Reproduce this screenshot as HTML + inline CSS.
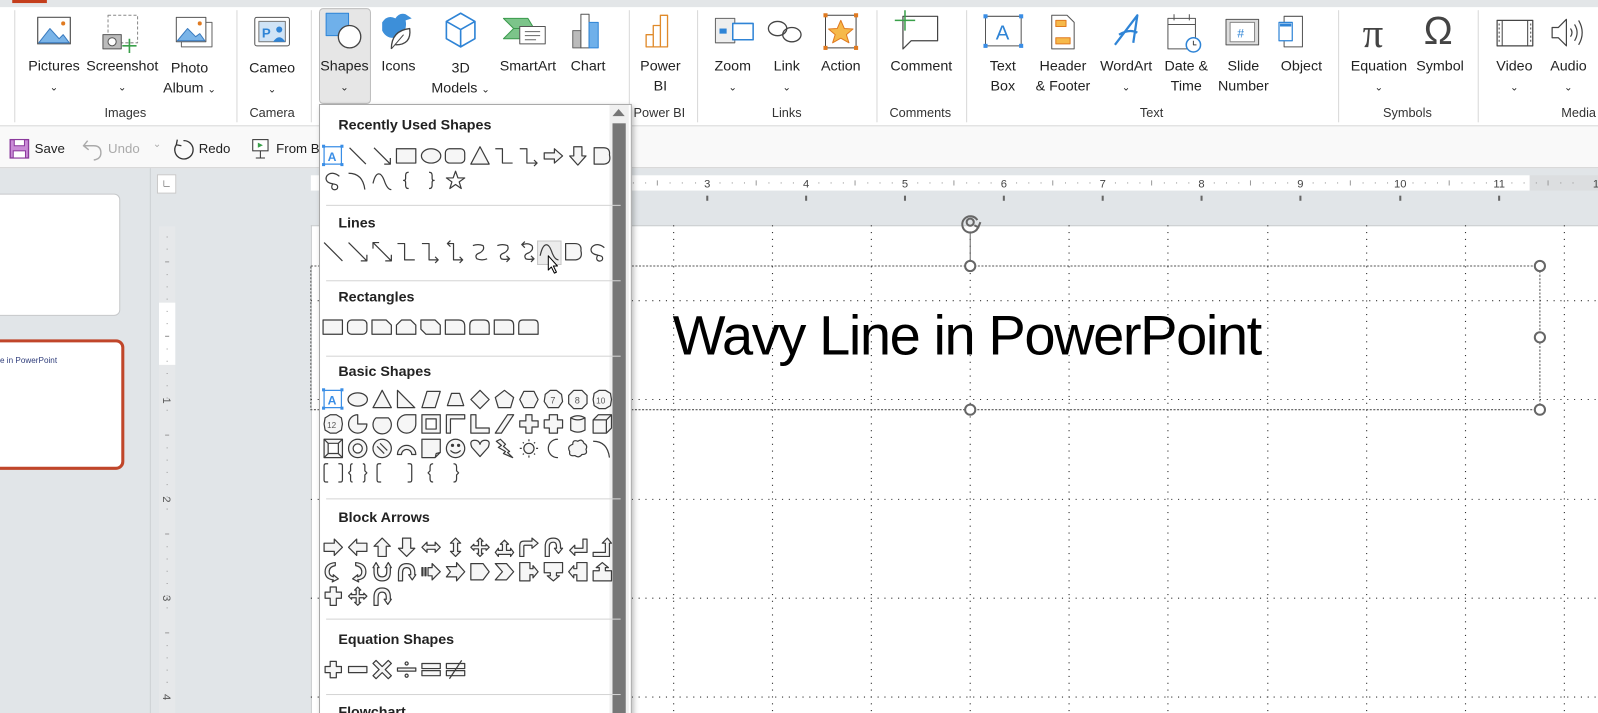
<!DOCTYPE html>
<html><head><meta charset="utf-8">
<style>
html,body{margin:0;padding:0;width:1598px;height:713px;overflow:hidden;background:#e1e5e8;}
#w{position:absolute;left:0;top:0;width:1568px;height:700px;transform:scale(1.01913);transform-origin:0 0;font-family:"Liberation Sans",Arial,sans-serif;color:#222;overflow:hidden;background:#e1e5e8}
.a{position:absolute}
.lbl{position:absolute;font-size:14px;text-align:center;line-height:20px;white-space:nowrap;transform:translateX(-50%)}
.glbl{position:absolute;font-size:12.5px;top:104px;transform:translateX(-50%);color:#333;white-space:nowrap}
.sep{position:absolute;top:10px;height:110px;width:1px;background:#d8d8d8}
.chev{font-size:10px}
.hd{position:absolute;left:332px;font-weight:bold;font-size:14px;color:#222}
.hs{position:absolute;left:320px;width:289px;height:1px;background:#d4d4d4}
</style></head><body><div id="w">
<!-- top strip -->
<div class="a" style="left:0;top:0;width:1568px;height:7px;background:#e3e6e8"></div>
<div class="a" style="left:12px;top:0;width:34px;height:3px;background:#c43e1c"></div>
<!-- ribbon -->
<div class="a" style="left:0;top:7px;width:1568px;height:116px;background:#fff;border-bottom:1px solid #d4d4d4"></div>
<div class="a" style="left:0;top:124px;width:1568px;height:40px;background:#f9f9f9;border-bottom:1px solid #d4d4d4"></div>

<div class="sep" style="left:14px"></div>
<div class="sep" style="left:232px"></div>
<div class="sep" style="left:305px"></div>
<div class="sep" style="left:617px"></div>
<div class="sep" style="left:684px"></div>
<div class="sep" style="left:860px"></div>
<div class="sep" style="left:948px"></div>
<div class="sep" style="left:1313px"></div>
<div class="sep" style="left:1450px"></div>

<!-- Shapes highlighted button -->
<div class="a" style="left:313px;top:8px;width:49px;height:92px;background:#e6e6e6;border:1px solid #bdbdbd;border-radius:4px"></div>

<svg class="a" style="left:0;top:0" width="1568" height="124">
<g stroke-linejoin="round">
<rect x="37" y="17" width="32" height="26" fill="#fff" stroke="#555" stroke-width="1.2"/>
<path d="M38 42 L49 28 L58 38 L62 34 L68 42Z" fill="#7ab4e8" stroke="#3a7bbf"/>
<circle cx="62" cy="23" r="2" fill="#e07a20"/>
<rect x="106" y="15" width="29" height="27" fill="none" stroke="#888" stroke-dasharray="3,2"/>
<rect x="101" y="34" width="18" height="14" fill="#bbb" stroke="#555"/>
<circle cx="110" cy="41" r="4" fill="#fff" stroke="#555"/>
<path d="M127 38 V52 M120 45 H134" stroke="#3aa04a" stroke-width="1.6"/>
<rect x="178" y="22" width="30" height="24" fill="#fff" stroke="#666"/>
<rect x="173" y="17" width="29" height="24" fill="#fff" stroke="#555"/>
<path d="M174 40 L184 28 L192 36 L196 33 L201 40Z" fill="#7ab4e8" stroke="#3a7bbf"/>
<circle cx="196" cy="23" r="2" fill="#e07a20"/>
<rect x="250" y="17" width="34" height="28" rx="2" fill="#fff" stroke="#555"/>
<rect x="254" y="21" width="26" height="20" fill="#cfe3f6" stroke="#777"/>
<text x="257" y="37" font-size="13" font-family="Liberation Sans" fill="#2f84d6" font-weight="bold">P</text>
<circle cx="274" cy="29" r="3" fill="#2f84d6"/><path d="M268 41 Q274 32 280 41Z" fill="#2f84d6"/>
<rect x="320" y="13" width="22" height="22" fill="#6fb0ea" stroke="#2f84d6"/>
<circle cx="343" cy="36" r="11" fill="#fff" stroke="#444" stroke-width="1.3"/>
<path d="M375 22 Q380 14 388 18 Q392 12 398 14 L404 18 L398 20 Q400 30 392 36 Q380 40 375 30Z" fill="#3d8fd9"/>
<path d="M384 48 Q384 30 402 28 Q404 44 388 44" fill="#fff" stroke="#444" stroke-width="1.3"/>
<path d="M384 48 L396 34" stroke="#444"/>
<path d="M452 13 L466 21 V38 L452 46 L438 38 V21Z M438 21 L452 29 L466 21 M452 29 V46" fill="none" stroke="#2f84d6" stroke-width="1.6"/>
<path d="M494 18 H518 L524 28 H504Z M504 28 H524 L518 38 H494Z" fill="#7cc48a" stroke="#3a9a4c"/>
<rect x="510" y="26" width="25" height="17" fill="#fff" stroke="#555"/>
<path d="M515 31 H530 M515 35 H530 M515 39 H526" stroke="#666"/>
<rect x="562" y="30" width="8" height="17" fill="#bbb" stroke="#666"/>
<rect x="570" y="14" width="8" height="33" fill="#fff" stroke="#555"/>
<rect x="578" y="22" width="9" height="25" fill="#6fb0ea" stroke="#2f84d6"/>
<path d="M634 46 V34 H641 V25 H648 V15 H655 V46Z M641 46 V34 M648 46 V25" fill="#fff" stroke="#e08a2a" stroke-width="1.3"/>
<rect x="702" y="18" width="19" height="24" fill="#eee" stroke="#666"/>
<rect x="719" y="23" width="20" height="16" fill="#fff" stroke="#2f84d6" stroke-width="1.5"/>
<rect x="706" y="28" width="7" height="5" fill="#2f84d6"/>
<ellipse cx="763" cy="28" rx="9" ry="7" fill="none" stroke="#444" stroke-width="1.3"/>
<ellipse cx="777" cy="34" rx="9" ry="7" fill="none" stroke="#444" stroke-width="1.3"/>
<rect x="810" y="15" width="30" height="32" fill="#fff" stroke="#444"/>
<path d="M825 20 L828.5 28 L837 28.5 L830.5 34 L833 42 L825 37.5 L817 42 L819.5 34 L813 28.5 L821.5 28Z" fill="#f6b94a" stroke="#e07a20"/>
<g fill="#e07a20"><rect x="808" y="13" width="4" height="4"/><rect x="838" y="13" width="4" height="4"/><rect x="808" y="45" width="4" height="4"/><rect x="838" y="45" width="4" height="4"/></g>
<path d="M886 16 H920 V40 H894 L886 48 V40 H886Z" fill="#fff" stroke="#444" stroke-width="1.2"/>
<path d="M888 10 V30 M878 20 H898" stroke="#3aa04a" stroke-width="1.5"/>
<rect x="967" y="16" width="35" height="29" fill="#fff" stroke="#555"/>
<text x="977" y="39" font-size="20" font-family="Liberation Sans" fill="#2f84d6">A</text>
<g fill="#3a8ee6"><rect x="965" y="14" width="4" height="4"/><rect x="1000" y="14" width="4" height="4"/><rect x="965" y="43" width="4" height="4"/><rect x="1000" y="43" width="4" height="4"/></g>
<path d="M1032 15 H1047 L1054 22 V48 H1032Z" fill="#fff" stroke="#555"/>
<rect x="1036" y="20" width="10" height="6" fill="#f6b94a" stroke="#e07a20"/>
<rect x="1036" y="37" width="14" height="6" fill="#f6b94a" stroke="#e07a20"/>
<path d="M1094 44 L1116 15 L1112 42 M1098 34 Q1108 28 1116 32" fill="none" stroke="#2f84d6" stroke-width="2.2"/>
<rect x="1146" y="18" width="27" height="30" fill="#fff" stroke="#555"/>
<path d="M1146 24 H1173 M1152 14 V20 M1167 14 V20" stroke="#555"/>
<circle cx="1171" cy="44" r="7" fill="#fff" stroke="#2f84d6" stroke-width="1.5"/>
<path d="M1171 40 V44 H1174" stroke="#444" fill="none"/>
<rect x="1203" y="19" width="32" height="25" fill="#ddd" stroke="#555"/>
<rect x="1207" y="22" width="24" height="19" fill="#fff" stroke="#888"/>
<text x="1214" y="37" font-size="12" font-family="Liberation Sans" fill="#2f84d6">#</text>
<rect x="1260" y="16" width="18" height="30" fill="#fff" stroke="#555"/>
<rect x="1255" y="22" width="13" height="18" fill="#fff" stroke="#2f84d6" stroke-width="1.2"/>
<rect x="1256" y="23" width="11" height="3" fill="#2f84d6"/>
<rect x="1469" y="20" width="35" height="25" fill="#fff" stroke="#444" stroke-width="1.2"/>
<path d="M1474 20 V45 M1499 20 V45" stroke="#444"/>
<path d="M1471 23 V43 M1502 23 V43" stroke="#444" stroke-dasharray="2,2"/>
<path d="M1523 27 H1529 L1537 19 V45 L1529 37 H1523Z" fill="#fff" stroke="#444" stroke-width="1.2"/>
<path d="M1541 28 Q1544 32 1541 36 M1545 24 Q1550 32 1545 40 M1549 20 Q1556 32 1549 44" fill="none" stroke="#444" stroke-width="1.2"/>
</g>
</svg>
<div class="a" style="left:1337px;top:9px;font-size:40px;font-family:'Liberation Serif',serif;color:#444">π</div>
<div class="a" style="left:1397px;top:10px;font-size:38px;font-family:'Liberation Sans',sans-serif;color:#444">Ω</div>

<div class="lbl" style="left:53px;top:54px">Pictures<br><span class="chev">⌄</span></div>
<div class="lbl" style="left:120px;top:54px">Screenshot<br><span class="chev">⌄</span></div>
<div class="lbl" style="left:186px;top:56px">Photo<br>Album <span class="chev">⌄</span></div>
<div class="lbl" style="left:267px;top:56px">Cameo<br><span class="chev">⌄</span></div>
<div class="lbl" style="left:338px;top:54px">Shapes<br><span class="chev">⌄</span></div>
<div class="lbl" style="left:391px;top:54px">Icons</div>
<div class="lbl" style="left:452px;top:56px">3D<br>Models <span class="chev">⌄</span></div>
<div class="lbl" style="left:518px;top:54px">SmartArt</div>
<div class="lbl" style="left:577px;top:54px">Chart</div>
<div class="lbl" style="left:648px;top:54px">Power<br>BI</div>
<div class="lbl" style="left:719px;top:54px">Zoom<br><span class="chev">⌄</span></div>
<div class="lbl" style="left:772px;top:54px">Link<br><span class="chev">⌄</span></div>
<div class="lbl" style="left:825px;top:54px">Action</div>
<div class="lbl" style="left:904px;top:54px">Comment</div>
<div class="lbl" style="left:984px;top:54px">Text<br>Box</div>
<div class="lbl" style="left:1043px;top:54px">Header<br>&amp; Footer</div>
<div class="lbl" style="left:1105px;top:54px">WordArt<br><span class="chev">⌄</span></div>
<div class="lbl" style="left:1164px;top:54px">Date &amp;<br>Time</div>
<div class="lbl" style="left:1220px;top:54px">Slide<br>Number</div>
<div class="lbl" style="left:1277px;top:54px">Object</div>
<div class="lbl" style="left:1353px;top:54px">Equation<br><span class="chev">⌄</span></div>
<div class="lbl" style="left:1413px;top:54px">Symbol</div>
<div class="lbl" style="left:1486px;top:54px">Video<br><span class="chev">⌄</span></div>
<div class="lbl" style="left:1539px;top:54px">Audio<br><span class="chev">⌄</span></div>

<div class="glbl" style="left:123px">Images</div>
<div class="glbl" style="left:267px">Camera</div>
<div class="glbl" style="left:647px">Power BI</div>
<div class="glbl" style="left:772px">Links</div>
<div class="glbl" style="left:903px">Comments</div>
<div class="glbl" style="left:1130px">Text</div>
<div class="glbl" style="left:1381px">Symbols</div>
<div class="glbl" style="left:1549px">Media</div>

<svg class="a" style="left:0;top:124px" width="320" height="40">
<rect x="10" y="13" width="18" height="18" fill="#c98bd6" stroke="#8b3a9c" stroke-width="1.3"/>
<rect x="14" y="13" width="10" height="6" fill="#fff" stroke="#8b3a9c"/>
<rect x="13" y="24" width="12" height="7" fill="#fff" stroke="#8b3a9c"/>
<path d="M86 14 L82 19 L87 23 M82 19 H92 Q99 19 99 26 Q99 32 92 33" fill="none" stroke="#aaa" stroke-width="1.4"/>
<path d="M180 14 A9 9 0 1 1 173 18 M174 13 L173 18 L178 19" fill="none" stroke="#333" stroke-width="1.3"/>
<rect x="248" y="13" width="15" height="11" fill="#fff" stroke="#333"/>
<path d="M253 16 L258 18.5 L253 21Z" fill="#3aa04a"/>
<path d="M255.5 24 V31 M251 31 H260" stroke="#333"/>
</svg>
<div class="a" style="left:34px;top:138px;font-size:13px">Save</div>
<div class="a" style="left:106px;top:138px;font-size:13px;color:#aaa">Undo</div>
<div class="a" style="left:150px;top:136px;font-size:10px;color:#aaa">⌄</div>
<div class="a" style="left:195px;top:138px;font-size:13px">Redo</div>
<div class="a" style="left:271px;top:138px;font-size:13px">From Be</div>

<div class="a" style="left:147px;top:165px;width:1px;height:535px;background:#cdd1d4"></div>
<div class="a" style="left:-10px;top:190px;width:126px;height:118px;background:#fff;border:1px solid #c6c8ca;border-radius:6px"></div>
<div class="a" style="left:-10px;top:333px;width:126px;height:122px;background:#fff;border:3px solid #c0462a;border-radius:8px"></div>
<div class="a" style="left:0;top:349px;font-size:8px;color:#2e3c7a">e in PowerPoint</div>

<div class="a" style="left:154px;top:171px;width:17px;height:17px;background:#fff;border:1px solid #c8c8c8;font-size:10px;line-height:17px;text-align:center;color:#333">∟</div>
<div class="a" style="left:156px;top:222px;width:16px;height:478px;background:#e6e8ea"></div>
<div class="a" style="left:156px;top:297px;width:16px;height:61px;background:#fff"></div>
<svg class="a" style="left:156px;top:222px" width="16" height="478">
<g stroke="#999">
<path d="M8 10 V11 M8 22 V23 M6 35 H10 M8 47 V48 M8 59 V60 M8 71 V72 M8 83 V84 M8 95 V96 M6 108 H10 M8 120 V121 M8 132 V133 M8 144 V145 M8 156 V157 M8 168 V169 M8 180 V181 M6 205 H10 M8 217 V218 M8 229 V230 M8 241 V242 M8 253 V254 M8 265 V266 M8 277 V278 M6 302 H10 M8 314 V315 M8 326 V327 M8 338 V339 M8 350 V351 M8 362 V363 M8 374 V375 M6 399 H10 M8 411 V412 M8 423 V424 M8 435 V436 M8 447 V448"/>
</g>
<g font-size="11" font-family="Liberation Sans" fill="#555">
<text transform="translate(4,168) rotate(90)">1</text>
<text transform="translate(4,265) rotate(90)">2</text>
<text transform="translate(4,362) rotate(90)">3</text>
<text transform="translate(4,459) rotate(90)">4</text>
</g>
</svg>
<div class="a" style="left:305px;top:172px;width:1196px;height:15px;background:#fff"></div>
<div class="a" style="left:1501px;top:172px;width:67px;height:15px;background:#dcdee0"></div>
<svg class="a" style="left:305px;top:172px" width="1263" height="30">
<g font-size="11" font-family="Liberation Sans" fill="#444" text-anchor="middle">
<text x="389" y="12">3</text><text x="486" y="12">4</text><text x="583" y="12">5</text><text x="680" y="12">6</text><text x="777" y="12">7</text><text x="874" y="12">8</text><text x="971" y="12">9</text><text x="1069" y="12">10</text><text x="1166" y="12">11</text><text x="1261" y="12">1</text>
</g>
<g stroke="#999">
<path d="M316 7.5 h1 M328 7.5 h1 M340 5 v5 M352 7.5 h1 M364 7.5 h1 M377 7.5 h1 M401 7.5 h1 M413 7.5 h1 M425 7.5 h1 M437 5 v5 M449 7.5 h1 M461 7.5 h1 M473 7.5 h1 M498 7.5 h1 M510 7.5 h1 M522 7.5 h1 M534 5 v5 M546 7.5 h1 M558 7.5 h1 M570 7.5 h1 M595 7.5 h1 M607 7.5 h1 M619 7.5 h1 M631 5 v5 M643 7.5 h1 M655 7.5 h1 M667 7.5 h1 M692 7.5 h1 M704 7.5 h1 M716 7.5 h1 M728 5 v5 M740 7.5 h1 M752 7.5 h1 M764 7.5 h1 M789 7.5 h1 M801 7.5 h1 M813 7.5 h1 M825 5 v5 M837 7.5 h1 M849 7.5 h1 M861 7.5 h1 M886 7.5 h1 M898 7.5 h1 M910 7.5 h1 M922 5 v5 M934 7.5 h1 M946 7.5 h1 M958 7.5 h1 M983 7.5 h1 M995 7.5 h1 M1007 7.5 h1 M1020 5 v5 M1032 7.5 h1 M1044 7.5 h1 M1056 7.5 h1 M1081 7.5 h1 M1093 7.5 h1 M1105 7.5 h1 M1117 5 v5 M1129 7.5 h1 M1141 7.5 h1 M1153 7.5 h1 M1178 7.5 h1 M1190 7.5 h1 M1202 7.5 h1 M1214 5 v5 M1226 7.5 h1 M1238 7.5 h1"/>
</g>
<g fill="#666"><rect x="388" y="20" width="2" height="5"/><rect x="485" y="20" width="2" height="5"/><rect x="582" y="20" width="2" height="5"/><rect x="679" y="20" width="2" height="5"/><rect x="776" y="20" width="2" height="5"/><rect x="873" y="20" width="2" height="5"/><rect x="970" y="20" width="2" height="5"/><rect x="1068" y="20" width="2" height="5"/><rect x="1165" y="20" width="2" height="5"/></g>
</svg>

<div class="a" style="left:305px;top:221px;width:1263px;height:479px;background:#fff;border-top:1px solid #c5c8ca;border-left:1px solid #c5c8ca"></div>
<svg class="a" style="left:305px;top:221px;overflow:visible" width="1263" height="479">
<g stroke="#333" stroke-width="1.1" stroke-dasharray="1.1,5.6" fill="none">
<path d="M64 0 V479 M161 0 V479 M258 0 V479 M356 0 V479 M453 0 V479 M550 0 V479 M647 0 V479 M744 0 V479 M841 0 V479 M939 0 V479 M1036 0 V479 M1133 0 V479 M1230 0 V479"/>
<path d="M0 74 H1263 M0 171 H1263 M0 269 H1263 M0 366 H1263 M0 463 H1263"/>
</g>
<g stroke="#555" stroke-width="1" stroke-dasharray="2,1.5" fill="none">
<rect x="0" y="40" width="1206" height="141"/>
</g>
<path d="M647 6 V35" stroke="#666"/>
<g fill="#fff" stroke="#666" stroke-width="2">
<circle cx="647" cy="40" r="5"/><circle cx="1206" cy="40" r="5"/><circle cx="1206" cy="110" r="5"/><circle cx="647" cy="181" r="5"/><circle cx="1206" cy="181" r="5"/>
</g>
<g fill="none" stroke="#666" stroke-width="2"><path d="M654 -5 A8 8 0 1 0 655 1"/><circle cx="647" cy="-3" r="3.5"/><path d="M651 0 L655 2 L657 -3"/></g>
<text x="355" y="127" font-size="55" font-family="Liberation Sans" letter-spacing="-1.4" fill="#000">Wavy Line in PowerPoint</text>
</svg>

<div class="a" style="left:313px;top:102px;width:305px;height:600px;background:#fff;border:1px solid #a8a8a8;box-shadow:2px 2px 5px rgba(0,0,0,.25)"></div>
<div class="a" style="left:598px;top:103px;width:19px;height:600px;background:#f0f0f0"></div>
<div class="a" style="left:601px;top:121px;width:13px;height:580px;background:#777"></div>
<div class="a" style="left:601px;top:107px;width:0;height:0;border-left:6px solid transparent;border-right:6px solid transparent;border-bottom:7px solid #777"></div>

<div class="hd" style="top:114px">Recently Used Shapes</div>
<div class="hs" style="top:201px"></div>
<div class="hd" style="top:210px">Lines</div>
<div class="hs" style="top:275px"></div>
<div class="hd" style="top:283px">Rectangles</div>
<div class="hs" style="top:349px"></div>
<div class="hd" style="top:356px">Basic Shapes</div>
<div class="hs" style="top:489px"></div>
<div class="hd" style="top:499px">Block Arrows</div>
<div class="hs" style="top:607px"></div>
<div class="hd" style="top:619px">Equation Shapes</div>
<div class="hs" style="top:681px"></div>
<div class="hd" style="top:690px">Flowchart</div>

<div class="a" style="left:527px;top:236px;width:22px;height:22px;background:#ececec;border:1px solid #c6c6c6"></div>

<svg class="a" style="left:0;top:0" width="620" height="700">
<g fill="#f6f6f6" stroke="#3c3c3c" stroke-width="1.2" stroke-linejoin="round">
<g transform="translate(317,143)"><rect x="1" y="1" width="17" height="17" fill="#fff" stroke="#3a8ee6"/><text x="4.5" y="15" font-size="12" font-weight="bold" font-family="Liberation Sans" fill="#3a8ee6" stroke="none">A</text><g fill="#3a8ee6" stroke="none"><rect x="-1" y="-1" width="3" height="3"/><rect x="17" y="-1" width="3" height="3"/><rect x="-1" y="17" width="3" height="3"/><rect x="17" y="17" width="3" height="3"/></g></g>
<g transform="translate(341,143)" fill="none"><path d="M2 2 L18 18"/></g>
<g transform="translate(365,143)" fill="none"><path d="M2 2 L18 18 M18 12 V18 H12"/></g>
<g transform="translate(389,143)"><rect x="0" y="3" width="19" height="14"/></g>
<g transform="translate(413,143)"><ellipse cx="10" cy="10" rx="9.5" ry="7"/></g>
<g transform="translate(437,143)"><rect x="0" y="3" width="19" height="14" rx="4"/></g>
<g transform="translate(461,143)"><path d="M10 1 L19 18 H1Z"/></g>
<g transform="translate(485,143)" fill="none"><path d="M1 3 H8 V17 H18"/></g>
<g transform="translate(509,143)" fill="none"><path d="M1 3 H8 V17 H18 M15 14 L18 17 L15 20"/></g>
<g transform="translate(533,143)"><path d="M1 7 H11 V3 L19 10 L11 17 V13 H1Z"/></g>
<g transform="translate(557,143)"><path d="M6 1 H14 V10 H18 L10 19 L2 10 H6Z"/></g>
<g transform="translate(581,143)"><path d="M2 2 H11 Q18 2 17 9 Q19 17 12 18 H2Z"/></g>
<g transform="translate(317,167)" fill="none"><path d="M16 6 C8 -1 0 6 4 11 C8 15 16 12 14 18 C11 21 6 18 10 13"/></g>
<g transform="translate(341,167)" fill="none"><path d="M1 3 Q15 3 17 19"/></g>
<g transform="translate(365,167)" fill="none"><path d="M1 13 C4 0 9 2 12 10 C14 16 16 19 19 19"/></g>
<g transform="translate(389,167)" fill="none"><path d="M12 2 Q9 2 9 5 V8 Q9 10 7 10 Q9 10 9 12 V15 Q9 18 12 18"/></g>
<g transform="translate(413,167)" fill="none"><path d="M8 2 Q11 2 11 5 V8 Q11 10 13 10 Q11 10 11 12 V15 Q11 18 8 18"/></g>
<g transform="translate(437,167)"><path d="M10 1 L12.3 7.5 L19 7.6 L13.6 11.5 L15.6 18 L10 14 L4.4 18 L6.4 11.5 L1 7.6 L7.7 7.5Z" fill="#fff"/></g>
<g fill="none">
<g transform="translate(317,237)"><path d="M1 1 L19 19"/></g>
<g transform="translate(341,237)"><path d="M1 1 L19 19 M19 13 V19 H13"/></g>
<g transform="translate(365,237)"><path d="M1 1 L19 19 M19 13 V19 H13 M1 7 V1 H7"/></g>
<g transform="translate(389,237)"><path d="M1 2 H8 V18 H18"/></g>
<g transform="translate(413,237)"><path d="M1 2 H8 V18 H17 M14 15 L17 18 L14 21"/></g>
<g transform="translate(437,237)"><path d="M2 2 H8 V18 H17 M14 15 L17 18 L14 21 M5 -1 L2 2 L5 5"/></g>
<g transform="translate(461,237)"><path d="M3 4 Q8 2 13 4 Q15 8 10 11 Q4 13 7 17 Q12 19 17 17"/></g>
<g transform="translate(485,237)"><path d="M3 4 Q8 2 13 4 Q15 8 10 11 Q4 13 7 17 Q10 18 14 17 M12 14 L15 17 L12 20"/></g>
<g transform="translate(509,237)"><path d="M4 3 Q9 1 13 4 Q15 8 10 11 Q4 13 7 17 Q10 18 14 17 M12 14 L15 17 L12 20 M6 0 L3 3 L6 6"/></g>
<g transform="translate(529,237)"><path d="M1 14 C4 0 9 1 12 9 C14 15 16 18 19 18"/></g>
<g transform="translate(553,237)"><path d="M2 2 H11 Q18 2 17 9 Q19 17 12 18 H2Z" fill="#f6f6f6"/></g>
<g transform="translate(577,237)"><path d="M16 6 C8 -1 0 6 4 11 C8 15 16 12 14 18 C11 21 6 18 10 13"/></g>
</g>
<path d="M538 251 V265 L541 262 L544 268 L546 267 L543 261 L547 261Z" fill="#fff" stroke="#000" stroke-width="1"/>
<g transform="translate(317,311)"><rect x="0" y="3" width="19" height="14"/></g>
<g transform="translate(341,311)"><rect x="0" y="3" width="19" height="14" rx="4"/></g>
<g transform="translate(365,311)"><path d="M0 3 H14 L19 8 V17 H0Z"/></g>
<g transform="translate(389,311)"><path d="M5 3 H14 L19 8 V17 H0 V8Z"/></g>
<g transform="translate(413,311)"><path d="M0 3 H14 L19 8 V17 H5 L0 12Z"/></g>
<g transform="translate(437,311)"><path d="M0 3 H13 Q19 3 19 9 V17 H0Z"/></g>
<g transform="translate(461,311)"><path d="M5 3 H14 Q19 3 19 8 V17 H0 V8 Q0 3 5 3Z"/></g>
<g transform="translate(485,311)"><path d="M0 3 H14 Q19 3 19 8 V17 H0Z"/></g>
<g transform="translate(509,311)"><path d="M4 3 H15 Q19 3 19 7 V17 H0 V7 Q0 3 4 3Z"/></g>
<g transform="translate(317,382)"><rect x="1" y="1" width="17" height="17" fill="#fff" stroke="#3a8ee6"/><text x="4.5" y="15" font-size="12" font-weight="bold" font-family="Liberation Sans" fill="#3a8ee6" stroke="none">A</text><g fill="#3a8ee6" stroke="none"><rect x="-1" y="-1" width="3" height="3"/><rect x="17" y="-1" width="3" height="3"/><rect x="-1" y="17" width="3" height="3"/><rect x="17" y="17" width="3" height="3"/></g></g>
<g transform="translate(341,382)"><ellipse cx="10" cy="10" rx="9.5" ry="6.5"/></g>
<g transform="translate(365,382)"><path d="M10 1 L19 18 H1Z"/></g>
<g transform="translate(389,382)"><path d="M1 1 L18 18 H1Z"/></g>
<g transform="translate(413,382)"><path d="M6 2 H19 L14 18 H1Z"/></g>
<g transform="translate(437,382)"><path d="M6 4 H14 L18 16 H2Z"/></g>
<g transform="translate(461,382)"><path d="M10 1 L19 10 L10 19 L1 10Z"/></g>
<g transform="translate(485,382)"><path d="M10 1 L19 8 L16 18 H4 L1 8Z"/></g>
<g transform="translate(509,382)"><path d="M5 2 H15 L19 10 L15 18 H5 L1 10Z"/></g>
<g transform="translate(533,382)"><path d="M7 1 H13 L18 5 L19 12 L15 18 H5 L1 12 L2 5Z"/><text x="7" y="14" font-size="9" fill="#555" stroke="none" font-family="Liberation Sans">7</text></g>
<g transform="translate(557,382)"><path d="M6 1 H14 L19 6 V14 L14 19 H6 L1 14 V6Z"/><text x="7" y="14" font-size="9" fill="#555" stroke="none" font-family="Liberation Sans">8</text></g>
<g transform="translate(581,382)"><path d="M7 1 H13 L18 4 L19 10 L18 16 L13 19 H7 L2 16 L1 10 L2 4Z"/><text x="4" y="14" font-size="8" fill="#555" stroke="none" font-family="Liberation Sans">10</text></g>
<g transform="translate(317,406)"><path d="M7 1 H13 L18 4 L19 10 L18 16 L13 19 H7 L2 16 L1 10 L2 4Z"/><text x="4" y="14" font-size="8" fill="#555" stroke="none" font-family="Liberation Sans">12</text></g>
<g transform="translate(341,406)"><path d="M10 10 H19 A9 9 0 1 1 10 1Z"/></g>
<g transform="translate(365,406)"><path d="M4 4 L16 4 A9 9 0 1 1 4 4Z"/></g>
<g transform="translate(389,406)"><path d="M10 1 H19 V10 A9 9 0 1 1 10 1Z"/></g>
<g transform="translate(413,406)"><rect x="1" y="1" width="18" height="18"/><rect x="5" y="5" width="10" height="10" fill="#fff"/></g>
<g transform="translate(437,406)"><path d="M1 1 H19 V5 H5 V19 H1Z"/></g>
<g transform="translate(461,406)"><path d="M1 1 H6 V14 H19 V19 H1Z"/></g>
<g transform="translate(485,406)"><path d="M13 1 H19 L7 19 H1Z"/></g>
<g transform="translate(509,406)"><path d="M7 1 H13 V7 H19 V13 H13 V19 H7 V13 H1 V7 H7Z"/></g>
<g transform="translate(533,406)"><path d="M6 1 H14 V6 H19 V14 H14 V19 H6 V14 H1 V6 H6Z"/></g>
<g transform="translate(557,406)"><path d="M3 4 Q10 0 17 4 V16 Q10 20 3 16Z M3 4 Q10 8 17 4"/></g>
<g transform="translate(581,406)"><path d="M1 6 L6 1 H19 V14 L14 19 H1Z M1 6 H14 V19 M14 6 L19 1"/></g>
<g transform="translate(317,430)"><rect x="1" y="1" width="18" height="18"/><rect x="5" y="5" width="10" height="10" fill="#fff"/><path d="M1 1 L5 5 M19 1 L15 5 M1 19 L5 15 M19 19 L15 15"/></g>
<g transform="translate(341,430)"><circle cx="10" cy="10" r="9"/><circle cx="10" cy="10" r="4.5" fill="#fff"/></g>
<g transform="translate(365,430)"><circle cx="10" cy="10" r="9"/><path d="M5 8 L12 15 M8 5 L15 12"/></g>
<g transform="translate(389,430)"><path d="M1 16 A9 9 0 0 1 19 16 H15 A5 5 0 0 0 5 16Z"/></g>
<g transform="translate(413,430)"><path d="M1 1 H19 V14 L14 19 H1Z M14 19 L15 15 L19 14"/></g>
<g transform="translate(437,430)"><circle cx="10" cy="10" r="9"/><circle cx="7" cy="7" r="1" fill="#333"/><circle cx="13" cy="7" r="1" fill="#333"/><path d="M5 12 Q10 17 15 12" fill="none"/></g>
<g transform="translate(461,430)"><path d="M10 18 L2 9 Q-1 2 5 2 Q9 2 10 6 Q11 2 15 2 Q21 2 18 9Z"/></g>
<g transform="translate(485,430)"><path d="M6 1 L11 6 L9 8 L15 13 L13 14 L18 19 L9 15 L11 13 L4 9 L7 7 L2 3Z"/></g>
<g transform="translate(509,430)"><circle cx="10" cy="10" r="5"/><path d="M10 1 V3 M10 17 V19 M1 10 H3 M17 10 H19 M4 4 L5 5 M15 15 L16 16 M4 16 L5 15 M15 5 L16 4"/></g>
<g transform="translate(533,430)"><path d="M14 1 A9 9 0 1 0 14 19 A7 7 0 0 1 14 1Z"/></g>
<g transform="translate(557,430)"><path d="M5 6 Q5 1 10 3 Q14 0 16 5 Q20 7 18 11 Q20 16 14 16 Q11 20 7 17 Q1 18 2 13 Q-1 8 5 6Z"/></g>
<g transform="translate(581,430)" fill="none"><path d="M1 3 Q15 3 17 19"/></g>
<g fill="none">
<g transform="translate(317,454)"><path d="M5 1 H3 Q1 1 1 3 V17 Q1 19 3 19 H5 M15 1 H17 Q19 1 19 3 V17 Q19 19 17 19 H15"/></g>
<g transform="translate(341,454)"><path d="M5 1 Q3 1 3 3 V8 L1 10 L3 12 V17 Q3 19 5 19 M15 1 Q17 1 17 3 V8 L19 10 L17 12 V17 Q17 19 15 19"/></g>
<g transform="translate(365,454)"><path d="M9 1 H7 Q5 1 5 3 V17 Q5 19 7 19 H9"/></g>
<g transform="translate(389,454)"><path d="M11 1 H13 Q15 1 15 3 V17 Q15 19 13 19 H11"/></g>
<g transform="translate(413,454)"><path d="M12 1 Q9 1 9 4 V8 L7 10 L9 12 V16 Q9 19 12 19"/></g>
<g transform="translate(437,454)"><path d="M8 1 Q11 1 11 4 V8 L13 10 L11 12 V16 Q11 19 8 19"/></g>
</g>
<g transform="translate(317,527)"><path d="M1 6 H11 V2 L19 10 L11 18 V14 H1Z"/></g>
<g transform="translate(341,527)"><path d="M19 6 H9 V2 L1 10 L9 18 V14 H19Z"/></g>
<g transform="translate(365,527)"><path d="M6 19 V9 H2 L10 1 L18 9 H14 V19Z"/></g>
<g transform="translate(389,527)"><path d="M6 1 V11 H2 L10 19 L18 11 H14 V1Z"/></g>
<g transform="translate(413,527)"><path d="M1 10 L6 5 V8 H14 V5 L19 10 L14 15 V12 H6 V15Z"/></g>
<g transform="translate(437,527)"><path d="M10 1 L15 6 H12 V14 H15 L10 19 L5 14 H8 V6 H5Z"/></g>
<g transform="translate(461,527)"><path d="M10 1 L13 4 H11.5 V8.5 H16 V7 L19 10 L16 13 V11.5 H11.5 V16 H13 L10 19 L7 16 H8.5 V11.5 H4 V13 L1 10 L4 7 V8.5 H8.5 V4 H7Z"/></g>
<g transform="translate(485,527)"><path d="M10 3 L14 7 H12 V13 H16 V11 L19 15 L16 19 V17 H4 V19 L1 15 L4 11 V13 H8 V7 H6Z"/></g>
<g transform="translate(509,527)"><path d="M1 19 V8 Q1 4 5 4 H13 V1 L19 6 L13 11 V8 H6 Q5 8 5 9 V19Z"/></g>
<g transform="translate(533,527)"><path d="M2 19 V9 Q2 1 10 1 Q17 1 17 9 V11 H19 L15 16 L11 11 H13 V9 Q13 5 10 5 Q6 5 6 9 V19Z"/></g>
<g transform="translate(557,527)"><path d="M19 2 V15 H7 V18 L2 13 L7 8 V11 H15 V2Z"/></g>
<g transform="translate(581,527)"><path d="M1 19 V15 H13 V6 H10 L15 1 L19 6 H17 V19Z"/></g>
<g transform="translate(317,551)"><path d="M12 1 Q2 2 2 10 Q2 17 10 18 L9 20 L15 17 L10 13 L10 15 Q6 14 6 10 Q6 5 12 4Z"/></g>
<g transform="translate(341,551)"><path d="M8 1 Q18 2 18 10 Q18 17 10 18 L11 20 L5 17 L10 13 L10 15 Q14 14 14 10 Q14 5 8 4Z"/></g>
<g transform="translate(365,551)"><path d="M1 6 L4 1 L7 6 H5.5 V10 Q5.5 15 10 15 Q14.5 15 14.5 10 V6 H13 L16 1 L19 6 H18 V10 Q18 19 10 19 Q2 19 2 10 V6Z"/></g>
<g transform="translate(389,551)"><path d="M2 19 V11 Q2 2 10 2 Q18 2 18 11 V13 H19 L15.5 18 L12 13 H14 V11 Q14 6 10 6 Q6 6 6 11 V19Z"/></g>
<g transform="translate(413,551)"><path d="M1 6 H2 V14 H1Z M4 6 H5 V14 H4Z M7 6 H11 V2 L19 10 L11 18 V14 H7Z"/></g>
<g transform="translate(437,551)"><path d="M1 5 H11 V1 L19 10 L11 19 V15 H1 L5 10Z"/></g>
<g transform="translate(461,551)"><path d="M1 2 H13 L19 10 L13 18 H1Z"/></g>
<g transform="translate(485,551)"><path d="M1 2 H12 L19 10 L12 18 H1 L8 10Z"/></g>
<g transform="translate(509,551)"><path d="M1 1 H11 V7 H14 V4 L19 10 L14 16 V13 H11 V19 H1Z"/></g>
<g transform="translate(533,551)"><path d="M1 1 H19 V11 H13 V14 H16 L10 19 L4 14 H7 V11 H1Z"/></g>
<g transform="translate(557,551)"><path d="M19 1 H9 V7 H6 V4 L1 10 L6 16 V13 H9 V19 H19Z"/></g>
<g transform="translate(581,551)"><path d="M1 19 H19 V9 H13 V6 H16 L10 1 L4 6 H7 V9 H1Z"/></g>
<g transform="translate(317,575)"><path d="M7 1 H13 V6 H18 V12 H13 V19 H7 V12 H2 V6 H7Z"/></g>
<g transform="translate(341,575)"><path d="M10 1 L13 4 H11.5 V8.5 H16 V7 L19 10 L16 13 V11.5 H11.5 V16 H13 L10 19 L7 16 H8.5 V11.5 H4 V13 L1 10 L4 7 V8.5 H8.5 V4 H7Z"/></g>
<g transform="translate(365,575)"><path d="M2 19 V11 Q2 2 10 2 Q18 2 18 11 V13 H19 L15.5 18 L12 13 H14 V11 Q14 6 10 6 Q6 6 6 11 V19Z"/></g>
<g transform="translate(317,647)"><path d="M7 2 H13 V7 H18 V13 H13 V18 H7 V13 H2 V7 H7Z"/></g>
<g transform="translate(341,647)"><rect x="1" y="7" width="18" height="6"/></g>
<g transform="translate(365,647)"><path d="M4 1 L10 7 L16 1 L19 4 L13 10 L19 16 L16 19 L10 13 L4 19 L1 16 L7 10 L1 4Z"/></g>
<g transform="translate(389,647)"><rect x="1" y="8.5" width="18" height="3"/><circle cx="10" cy="4" r="1.5"/><circle cx="10" cy="16" r="1.5"/></g>
<g transform="translate(413,647)"><rect x="1" y="4" width="18" height="5"/><rect x="1" y="11" width="18" height="5"/></g>
<g transform="translate(437,647)"><rect x="1" y="4" width="18" height="5"/><rect x="1" y="11" width="18" height="5"/><path d="M4 19 L16 1"/></g>
</g>
</svg>
</div></body></html>
